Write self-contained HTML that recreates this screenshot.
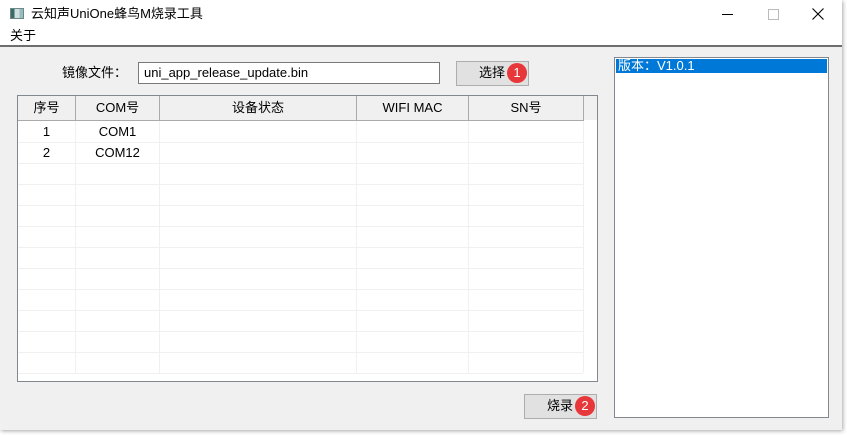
<!DOCTYPE html>
<html><head><meta charset="utf-8"><style>
body{margin:0;width:847px;height:435px;background:#fff;position:relative;overflow:hidden;font-family:"Liberation Sans","Noto Sans CJK SC",sans-serif;font-size:13px;line-height:16px;color:#000}
.a{position:absolute}
.win{left:0;top:0;width:842px;height:430px;background:#f0f0f0;box-shadow:1px 1px 4px rgba(0,0,0,.35)}
.tb{left:0;top:0;width:842px;height:27px;background:#fff}
.mb{left:0;top:27px;width:842px;height:18px;background:#fff}
.btn{background:#e1e1e1;border:1px solid #adadad;box-sizing:border-box}
.badge{width:20px;height:20px;border-radius:50%;background:#e8373a;color:#fff;font-size:13px;text-align:center;line-height:20px}
.hd{top:96px;height:24px;background:#f0f0f0;line-height:24px;text-align:center;border-right:1px solid #aaa;box-sizing:border-box;font-size:13px}
.hl{left:18px;width:565px;height:1px;background:#f0f0f0}
.vl{top:121px;width:1px;height:252px;background:#f0f0f0}
.c{height:21px;line-height:21px;text-align:center}
</style></head><body>
<div class="a win"></div>
<div class="a tb"></div>
<div class="a" style="left:10px;top:8px;width:14px;height:11px;border:1px solid #6a8a8a;background:linear-gradient(90deg,#3c6a64 0 30%,#cfe0e0 30% 70%,#9bb 70%);box-sizing:border-box"></div>
<div class="a" style="left:31px;top:6px;font-size:13px">云知声UniOne蜂鸟M烧录工具</div>
<div class="a" style="left:722px;top:14px;width:11px;height:1px;background:#000"></div>
<div class="a" style="left:768px;top:9px;width:9px;height:9px;border:1px solid #bbb"></div>
<svg class="a" style="left:812px;top:8px" width="12" height="12"><path d="M0.5 0.5L11.5 11.5M11.5 0.5L0.5 11.5" stroke="#000" stroke-width="1.1"/></svg>
<div class="a mb"></div>
<div class="a" style="left:10px;top:28px">关于</div>
<div class="a" style="left:0;top:45px;width:842px;height:2px;background:#6e6e6e"></div>

<div class="a" style="left:62px;top:65px">镜像文件：</div>
<div class="a" style="left:138px;top:62px;width:302px;height:22px;border:1px solid #7a7a7a;background:#fff;box-sizing:border-box;padding-left:5px;line-height:20px">uni_app_release_update.bin</div>
<div class="a btn" style="left:456px;top:61px;width:73px;height:25px"></div>
<div class="a" style="left:479px;top:65px">选择</div>
<div class="a badge" style="left:507px;top:63px">1</div>

<div class="a" style="left:17px;top:95px;width:581px;height:287px;border:1px solid #828790;background:#fff;box-sizing:border-box"></div>
<div class="a" style="left:18px;top:96px;width:579px;height:24px;background:#f0f0f0"></div>
<div class="a hd" style="left:18px;width:58px">序号</div>
<div class="a hd" style="left:76px;width:84px">COM号</div>
<div class="a hd" style="left:160px;width:197px">设备状态</div>
<div class="a hd" style="left:357px;width:112px">WIFI MAC</div>
<div class="a hd" style="left:469px;width:115px">SN号</div>
<div class="a" style="left:18px;top:120px;width:566px;height:1px;background:#aaa"></div>
<div class="a hl" style="top:142px"></div><div class="a hl" style="top:163px"></div><div class="a hl" style="top:184px"></div><div class="a hl" style="top:205px"></div><div class="a hl" style="top:226px"></div><div class="a hl" style="top:247px"></div><div class="a hl" style="top:268px"></div><div class="a hl" style="top:289px"></div><div class="a hl" style="top:310px"></div><div class="a hl" style="top:331px"></div><div class="a hl" style="top:352px"></div><div class="a hl" style="top:373px"></div>
<div class="a vl" style="left:75px"></div><div class="a vl" style="left:159px"></div><div class="a vl" style="left:356px"></div><div class="a vl" style="left:468px"></div><div class="a vl" style="left:583px"></div>
<div class="a c" style="left:18px;top:121px;width:57px">1</div>
<div class="a c" style="left:76px;top:121px;width:83px">COM1</div>
<div class="a c" style="left:18px;top:142px;width:57px">2</div>
<div class="a c" style="left:76px;top:142px;width:83px">COM12</div>

<div class="a btn" style="left:524px;top:394px;width:73px;height:25px"></div>
<div class="a" style="left:547px;top:398px">烧录</div>
<div class="a badge" style="left:575px;top:396px">2</div>

<div class="a" style="left:614px;top:57px;width:215px;height:361px;border:1px solid #828790;background:#fff;box-sizing:border-box"></div>
<div class="a" style="left:616px;top:59px;width:211px;height:14px;background:#0078d7;color:#fff;font-size:13px;line-height:14px;padding-left:2px;box-sizing:border-box">版本：V1.0.1</div>
</body></html>
